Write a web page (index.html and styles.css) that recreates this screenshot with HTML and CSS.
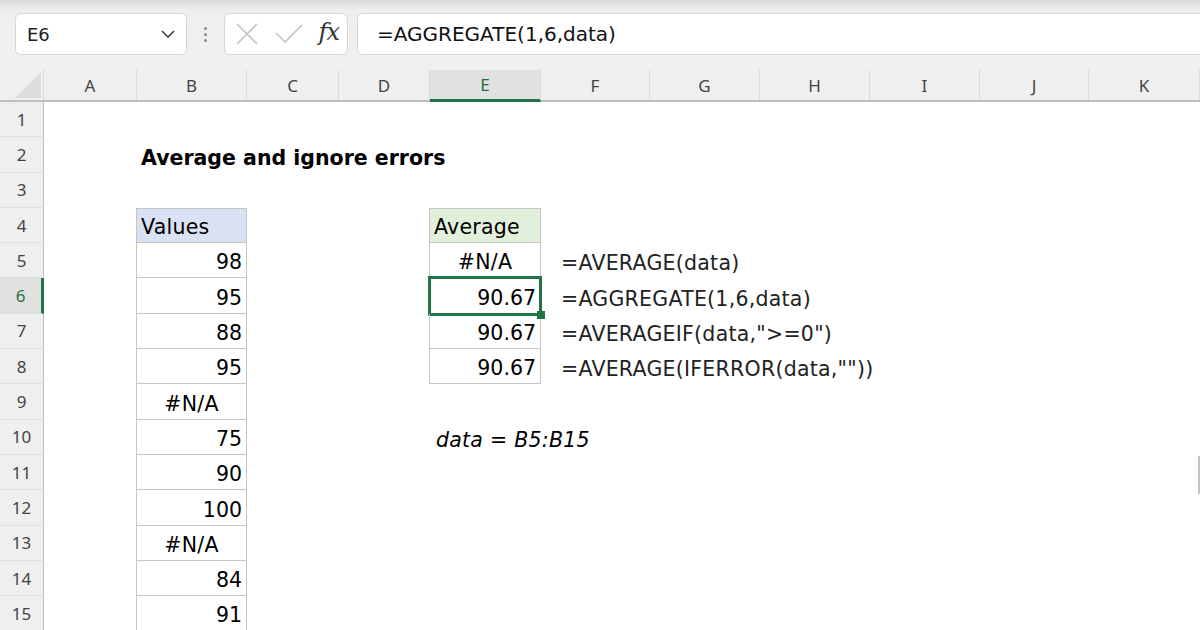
FILE: index.html
```html
<!DOCTYPE html>
<html lang="en">
<head>
    <meta charset="UTF-8">
    <title>Average and ignore errors</title>
    <link rel="stylesheet" href="styles.css">
</head>
<body>
    <div class="toolbar">
        <div class="namebox">
            <span>E6</span>
            <svg class="chev" width="16" height="10" viewBox="0 0 16 10"><path d="M2 2l6 6 6-6" fill="none" stroke="#444" stroke-width="1.6"/></svg>
        </div>
        <div class="dots"><i></i><i></i><i></i></div>
        <div class="fxbox">
            <svg width="24" height="24" viewBox="0 0 24 24"><path d="M2 2l20 20M22 2L2 22" stroke="#c4c4c4" stroke-width="1.6"/></svg>
            <svg width="28" height="22" viewBox="0 0 28 22"><path d="M1 10l9 9L27 2" fill="none" stroke="#c4c4c4" stroke-width="1.6"/></svg>
            <span class="fx">fx</span>
        </div>
        <div class="formula">=AGGREGATE(1,6,data)</div>
    </div>

    <div class="sheet">
        <div class="row colhead">
            <div class="corner"></div>
            <div class="ch">A</div>
            <div class="ch">B</div>
            <div class="ch">C</div>
            <div class="ch">D</div>
            <div class="ch active">E</div>
            <div class="ch">F</div>
            <div class="ch">G</div>
            <div class="ch">H</div>
            <div class="ch">I</div>
            <div class="ch">J</div>
            <div class="ch">K</div>
        </div>

        <div class="row"><div class="rh">1</div></div>
        <div class="row">
            <div class="rh">2</div>
            <div class="c"></div>
            <div class="c title">Average and ignore errors</div>
        </div>
        <div class="row"><div class="rh">3</div></div>
        <div class="row">
            <div class="rh">4</div>
            <div class="c"></div>
            <div class="c bd top head-blue">Values</div>
            <div class="c"></div>
            <div class="c"></div>
            <div class="c bd top head-green">Average</div>
        </div>
        <div class="row">
            <div class="rh">5</div>
            <div class="c"></div>
            <div class="c bd r">98</div>
            <div class="c"></div>
            <div class="c"></div>
            <div class="c bd ctr">#N/A</div>
            <div class="c note">=AVERAGE(data)</div>
        </div>
        <div class="row">
            <div class="rh active">6</div>
            <div class="c"></div>
            <div class="c bd r">95</div>
            <div class="c"></div>
            <div class="c"></div>
            <div class="c bd r sel">90.67</div>
            <div class="c note">=AGGREGATE(1,6,data)</div>
        </div>
        <div class="row">
            <div class="rh">7</div>
            <div class="c"></div>
            <div class="c bd r">88</div>
            <div class="c"></div>
            <div class="c"></div>
            <div class="c bd r">90.67</div>
            <div class="c note">=AVERAGEIF(data,"&gt;=0")</div>
        </div>
        <div class="row">
            <div class="rh">8</div>
            <div class="c"></div>
            <div class="c bd r">95</div>
            <div class="c"></div>
            <div class="c"></div>
            <div class="c bd r">90.67</div>
            <div class="c note">=AVERAGE(IFERROR(data,""))</div>
        </div>
        <div class="row">
            <div class="rh">9</div>
            <div class="c"></div>
            <div class="c bd ctr">#N/A</div>
        </div>
        <div class="row">
            <div class="rh">10</div>
            <div class="c"></div>
            <div class="c bd r">75</div>
            <div class="c"></div>
            <div class="c"></div>
            <div class="c it">data = B5:B15</div>
        </div>
        <div class="row">
            <div class="rh">11</div>
            <div class="c"></div>
            <div class="c bd r">90</div>
        </div>
        <div class="row">
            <div class="rh">12</div>
            <div class="c"></div>
            <div class="c bd r">100</div>
        </div>
        <div class="row">
            <div class="rh">13</div>
            <div class="c"></div>
            <div class="c bd ctr">#N/A</div>
        </div>
        <div class="row">
            <div class="rh">14</div>
            <div class="c"></div>
            <div class="c bd r">84</div>
        </div>
        <div class="row">
            <div class="rh">15</div>
            <div class="c"></div>
            <div class="c bd r">91</div>
        </div>
    </div>

    <div class="scroll-thumb"></div>
</body>
</html>
```

FILE: styles.css
```css
body {
    margin: 0;
    width: 1200px;
    height: 630px;
    overflow: hidden;
    background: #fff;
    font-family: 'Noto Sans', 'Open Sans', sans-serif;
    position: relative;
}

/* formula bar */
.toolbar {
    height: 68px;
    box-sizing: border-box;
    padding: 13px 0 13px 15px;
    display: flex;
    align-items: stretch;
    background: linear-gradient(#d9d9d9 0, #efefef 11px, #f0f0f0 100%);
}

.namebox,
.fxbox,
.formula {
    background: #fff;
    border: 1px solid #d6d6d6;
    border-radius: 6px;
    box-sizing: border-box;
    display: flex;
    align-items: center;
}

.namebox {
    width: 172px;
    padding: 0 10px 0 11px;
    justify-content: space-between;
    font-family: 'DejaVu Sans', sans-serif;
    font-size: 18px;
    color: #222;
}

.dots {
    width: 37px;
    display: flex;
    flex-direction: column;
    align-items: center;
    justify-content: center;
    gap: 3px;
}

.dots i {
    width: 3px;
    height: 3px;
    background: #888;
    border-radius: 50%;
}

.fxbox {
    width: 124px;
    padding: 0 8px 0 10px;
    justify-content: space-between;
}

.fx {
    font-family: 'DejaVu Serif', 'Liberation Serif', serif;
    font-style: italic;
    font-size: 24px;
    color: #333;
    letter-spacing: -1px;
    margin-top: -4px;
}

.formula {
    flex: 1;
    margin-left: 9px;
    margin-right: -20px;
    padding-left: 19px;
    font-family: 'DejaVu Sans', sans-serif;
    font-size: 20px;
    color: #111;
}

/* grid */
.row {
    display: grid;
    grid-template-columns: 44px 93px 110px 92px 91px 111px 109px 110px 110px 110px 109px 1fr;
    height: 35.3px;
}

.colhead {
    height: 34px;
    background: #efefef;
    border-bottom: 2px solid #bdbdbd;
    box-sizing: border-box;
}

.corner {
    position: relative;
    border-right: 1px solid #dcdcdc;
}

.corner::after {
    content: '';
    position: absolute;
    right: 2px;
    bottom: 2px;
    width: 26px;
    height: 26px;
    background: #dcdcdc;
    clip-path: polygon(100% 0, 100% 100%, 0 100%);
}

.ch {
    display: flex;
    align-items: center;
    justify-content: center;
    font-size: 17px;
    color: #444;
    border-right: 1px solid #dadada;
    margin: 2px 0 0;
}

.ch.active {
    background: #e1e1e1;
    color: #1e6e42;
    border-bottom: 3px solid #217346;
    margin-bottom: -2px;
}

.rh {
    background: #efefef;
    border-right: 1px solid #bdbdbd;
    border-bottom: 1px solid #dedede;
    box-sizing: border-box;
    display: flex;
    align-items: center;
    justify-content: center;
    font-size: 17px;
    color: #444;
}

.rh.active {
    background: #e1e1e1;
    color: #1e6e42;
    border-right: 3px solid #217346;
}

.c {
    font-family: 'DejaVu Sans', 'Open Sans', sans-serif;
    font-size: 20.5px;
    letter-spacing: 0.25px;
    color: #000;
    display: flex;
    align-items: flex-end;
    padding: 0 4px 3px;
    box-sizing: border-box;
    white-space: nowrap;
    position: relative;
}

.bd {
    border-left: 1px solid #c6c6c6;
    border-right: 1px solid #c6c6c6;
    border-bottom: 1px solid #c6c6c6;
    margin-left: -1px;
}

.bd.top {
    border-top: 1px solid #c6c6c6;
}

.head-blue {
    background: #d9e1f2;
}

.head-green {
    background: #e2efda;
}

.r {
    justify-content: flex-end;
    letter-spacing: 0;
}

.ctr {
    justify-content: center;
}

.title {
    font-weight: bold;
    letter-spacing: 0;
}

.it {
    font-style: italic;
    padding-left: 6px;
}

.note {
    padding-left: 20px;
    color: #222;
}

.sel::after {
    content: '';
    position: absolute;
    top: -2px;
    left: -2px;
    right: -2px;
    bottom: -3px;
    border: 3px solid #217346;
    box-sizing: border-box;
}

.sel::before {
    content: '';
    position: absolute;
    right: -5px;
    bottom: -6px;
    width: 8px;
    height: 8px;
    background: #217346;
    z-index: 2;
}

.scroll-thumb {
    position: absolute;
    right: 0;
    top: 456px;
    width: 2px;
    height: 38px;
    background: #c4c4c4;
}
```
